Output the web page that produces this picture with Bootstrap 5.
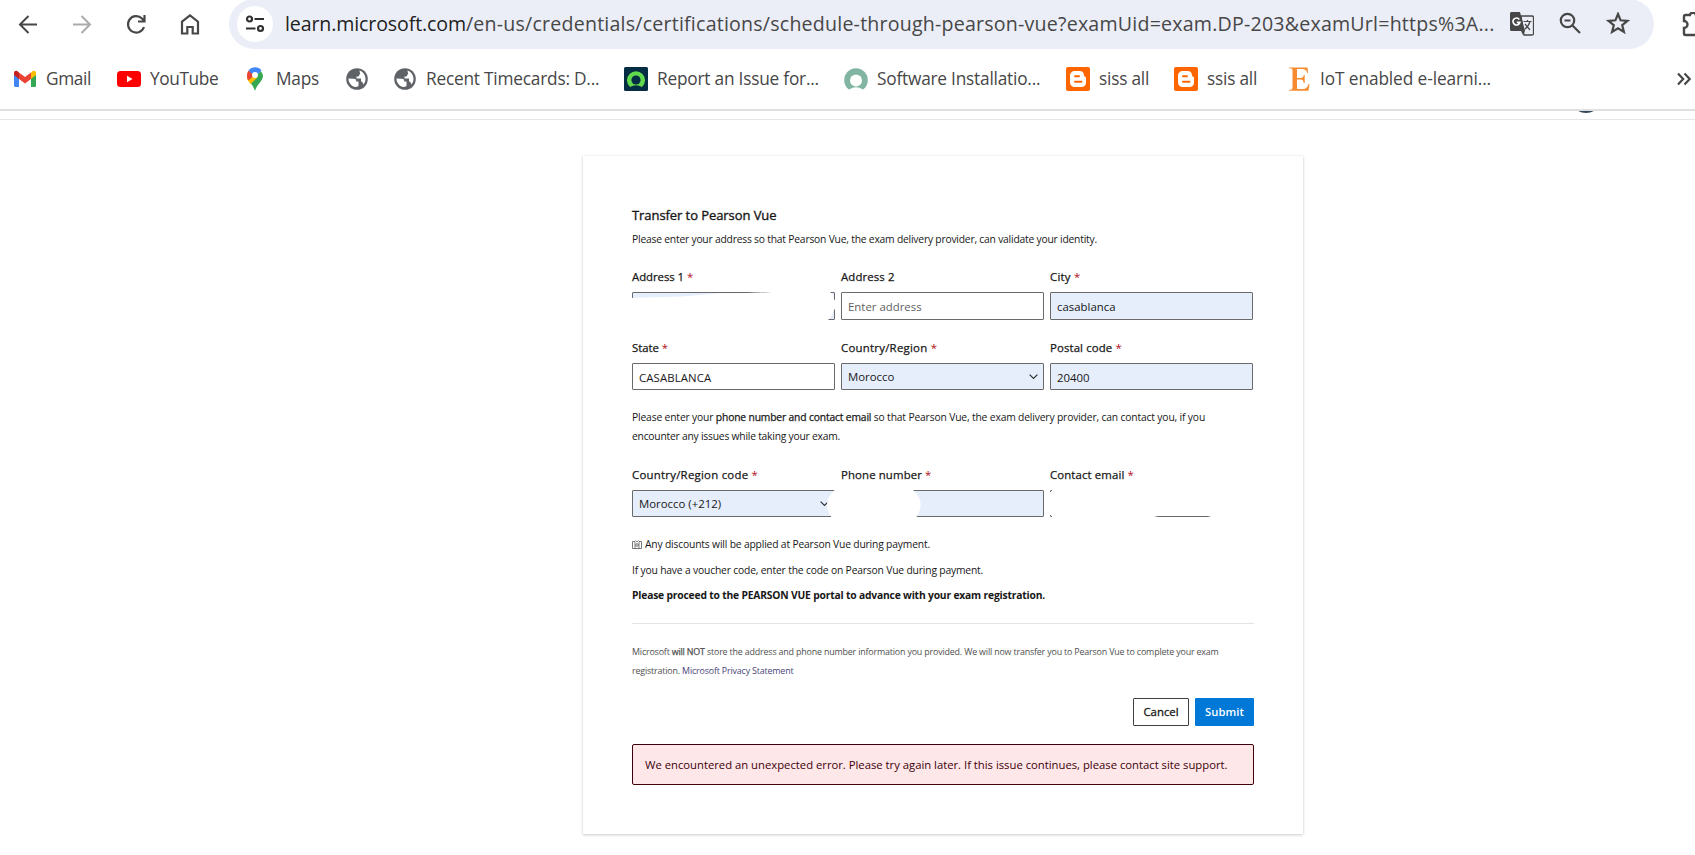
<!DOCTYPE html>
<html lang="en">
<head>
<meta charset="utf-8">
<meta name="viewport" content="width=device-width, initial-scale=1">
<title>Transfer to Pearson Vue</title>
<link rel="stylesheet" href="https://cdn.jsdelivr.net/npm/bootstrap@5.3.0/dist/css/bootstrap.min.css">
<style>
body{font-family:"Open Sans","Noto Sans",sans-serif;color:#171717;background:#fff;overflow:hidden;height:855px}
svg{display:block;flex:none}
.toolbar{height:49px;padding-left:16px;gap:30px;color:#474747}
.omnibox{flex:none;width:1425px;height:50px;margin:-1px 0 0 -3px;border-radius:25px;background:#ebeef7;padding:0 24px 0 8px}
.site-info{width:36px;height:36px;margin-right:12px}
.url{font-size:19.6px;letter-spacing:.21px;color:#474747;white-space:nowrap}
.url b{font-weight:400;color:#1f1f1f;letter-spacing:-.13px}
.omni-actions{gap:24px}
.bookmarks{display:grid;grid-template-columns:104px 126px 102px 48px 231px 220px 222px 108px 113px 390px 1fr;height:60px;padding-left:13px;font-size:17.3px;letter-spacing:-.22px;color:#474747;border-bottom:2px solid #dfdfdf;box-sizing:content-box;white-space:nowrap}
.bookmarks>div{display:flex;align-items:center;gap:9px}
.bookmarks>div:nth-child(-n+2){letter-spacing:-.4px}
.bookmarks>div:nth-child(10){letter-spacing:-.105px}
.site-header{height:9px;border-bottom:1px solid #e6e6e6;overflow:hidden;position:relative}
.avatar{position:absolute;left:1570px;top:-30px;width:32px;height:32px;border-radius:50%;background:#33475b}
.panel{width:720px;height:678px;margin:36px 0 0 583px;padding:48px 49px;box-shadow:0 1px 3px rgba(0,0,0,.2),0 0 1px rgba(0,0,0,.1)}
.panel h1{font-size:13px;font-weight:400;-webkit-text-stroke:.35px;letter-spacing:-.07px;line-height:20px;margin:1px 0 5px}
.copy{font-size:10.3px;letter-spacing:-.17px;line-height:19px;margin:0}
.copy.intro{letter-spacing:-.205px}
.copy.contact{letter-spacing:-.155px}
.copy.contact .second{letter-spacing:-.22px}
.copy.fw-bold{letter-spacing:-.186px}
.medium{-webkit-text-stroke:.25px}
.fields{display:grid;grid-template-columns:repeat(3,203px);gap:6px}
.field label{display:block;font-size:11.4px;letter-spacing:.12px;-webkit-text-stroke:.25px;line-height:18px;margin-bottom:6px}
.field label.wide{letter-spacing:.25px}
.field label.tight{letter-spacing:-.05px}
.field label i{font-style:normal;color:#b10e1c;-webkit-text-stroke:0}
.box{position:relative;height:27px}
.box.tall{height:28px}
.box .form-control,.box .form-select{height:100%;min-height:0;border:1px solid #6a6a6a;border-radius:1px;padding:1px 7px 0 6px;font-size:11.4px;line-height:24px;color:#171717;background-color:#fff}
.box .form-control.caps{letter-spacing:.1px}
.box .filled{background-color:#e6eefc}
.box .form-control::placeholder{color:#5f5f5f}
.box .form-select{background-size:9px 9px;background-position:right 5px center;background-image:url("data:image/svg+xml,%3csvg xmlns='http://www.w3.org/2000/svg' viewBox='0 0 9 9'%3e%3cpath fill='none' stroke='%23333' stroke-width='1.2' d='M.6 2.6l3.9 3.9 3.9-3.9'/%3e%3c/svg%3e")}
.mask{position:absolute;inset:0;overflow:visible;z-index:2}
.rule{height:1px;background:#e3e3e3}
.fine{font-size:8.9px;letter-spacing:-.17px;line-height:19px;color:#505050}
.fine a{color:#4b4579;text-decoration:none}
.actions{gap:6px}
.actions .btn{height:28px;border-radius:1px;padding:0;font-size:11.2px;font-weight:600;line-height:26px}
.actions .btn-cancel{width:56px;border:1px solid #404040;background:#fff;color:#171717;font-weight:400;font-size:11.4px;-webkit-text-stroke:.3px}
.actions .btn-submit{width:59px;background:#0078d7;color:#fff;letter-spacing:.09px}
.error-box{height:41px;border:1px solid #3f0009;border-radius:2px;background:#fde7e9;color:#3f0009;font-size:11.3px;letter-spacing:-.014px;padding:1px 12px 0;margin:18px 0 0}
</style>
</head>
<body>
<header>
  <div class="toolbar d-flex align-items-center">
    <svg width="24" height="24" viewBox="0 0 24 24" fill="none" stroke="#474747" stroke-width="2"><path d="M21 11.500H4.500M12.500 3L4 11.500 12.500 20"/></svg>
    <svg width="24" height="24" viewBox="0 0 24 24" fill="none" stroke="#ababab" stroke-width="2"><path d="M3 11.500h16.500M11.500 3l8.500 8.500-8.500 8.500"/></svg>
    <svg width="24" height="24" viewBox="0 0 24 24" fill="none" stroke="#474747" stroke-width="2.200"><path d="M20 14A8.200 8.200 0 1 1 18 5.500L20.500 8M20.500 2V8.500H14"/></svg>
    <svg width="24" height="24" viewBox="0 0 24 24" fill="none" stroke="#474747" stroke-width="2.200"><path d="M4 8.700L12 2.500l8 6.200V20.500h-5.300V14H9.300v6.500H4z"/></svg>
    <div class="omnibox d-flex align-items-center">
      <div class="site-info rounded-circle bg-white d-flex align-items-center justify-content-center">
        <svg width="20" height="20" viewBox="0 0 20 20" fill="none" stroke="#303030" stroke-width="2.200"><circle cx="4.500" cy="5" r="2.500"/><path d="M9.500 5H19M1 14.500h9.500"/><circle cx="15.500" cy="14.500" r="2.500"/></svg>
      </div>
      <span class="url"><b>learn.microsoft.com</b>/en-us/credentials/certifications/schedule-through-pearson-vue?examUid=exam.DP-203&amp;examUrl=https%3A...</span>
      <div class="omni-actions d-flex ms-auto">
        <svg width="24" height="24" viewBox="0 0 24 24"><path d="M11 4h11a1.500 1.500 0 0 1 1.500 1.500v16A1.500 1.500 0 0 1 22 23h-8z" fill="#ebeef7" stroke="#474747" stroke-width="1.300"/><path d="M1.500 0H10l5 19H1.500A1.500 1.500 0 0 1 0 17.500v-16A1.500 1.500 0 0 1 1.500 0zM11 19h4l-2 4z" fill="#474747"/><path d="M9.300 7.400a3.500 3.500 0 1 0 .6 2.900H6.800" fill="none" stroke="#fff" stroke-width="1.700"/><path d="M13.500 9.500h8M17.500 8v1.500M20 9.500c-1 4-3 6-5.500 8M15 12l5 6" stroke="#474747" stroke-width="1.200" fill="none"/></svg>
        <svg width="24" height="24" viewBox="0 0 24 24" fill="none" stroke="#474747" stroke-width="2.200"><circle cx="9.500" cy="8.500" r="6.700"/><path d="M14.500 13.500l7.500 7.500M6.500 8.500h6"/></svg>
        <svg width="24" height="24" viewBox="0 0 24 24"><path d="M12 2l2.600 6.300 6.900.5-5.300 4.400 1.700 6.700-5.900-3.600-5.900 3.600 1.700-6.700-5.300-4.400 6.900-.5z" fill="none" stroke="#474747" stroke-width="2.200"/></svg>
      </div>
    </div>
    <svg width="24" height="26" viewBox="0 0 24 26" fill="none" stroke="#474747" stroke-width="2.400" style="margin-left:-2px"><path d="M9 3H3.500A1.500 1.500 0 0 0 2 4.500V9a3.500 3.500 0 0 1 0 7v5.500A1.500 1.500 0 0 0 3.500 23H20M8 3c0-3 6-3 6 0h6"/></svg>
  </div>

  <nav class="bookmarks">
    <div><svg width="24" height="24" viewBox="0 0 24 24"><path fill="#4285f4" d="M1 7l5 3.500V20H2.500A1.500 1.500 0 0 1 1 18.500z"/><path fill="#34a853" d="M18 10.500L23 7v11.500a1.500 1.500 0 0 1-1.500 1.500H18z"/><path fill="#fbbc04" d="M18 5.500l1.500-1.200C21 3.200 23 4.200 23 6v2l-5 4z"/><path fill="#ea4335" d="M6 5.500l6 4.500 6-4.500V12l-6 4.500L6 12z"/><path fill="#c5221f" d="M1 6c0-1.800 2-2.800 3.500-1.700L6 5.500V12L1 8z"/></svg><span>Gmail</span></div>
    <div><svg width="24" height="24" viewBox="0 0 24 24"><rect y="4" width="24" height="16" rx="3.500" fill="#f00"/><path d="M10 8.800v6.400l5.500-3.200z" fill="#fff"/></svg><span>YouTube</span></div>
    <div><svg width="24" height="24" viewBox="0 0 24 24"><path d="M12 24c-1-3.500-2.500-5.500-4.500-8L17.500 4A8 8 0 0 1 20 8.500c0 6-6 8-8 15.500z" fill="#34a853"/><path d="M4.200 10.200L12 8l2 3-6.500 6C5.500 14.500 4.200 12.500 4.200 10.200z" fill="#fbbc04"/><path d="M5.500 3.500L12 8l-7 5.500C3.500 10.500 3.500 6.200 5.500 3.500z" fill="#ea4335"/><path d="M5.500 3.500C9-1 15.500-.8 18.500 3.500L12 10z" fill="#4285f4"/><circle cx="12" cy="8" r="3" fill="#fff"/></svg><span>Maps</span></div>
    <div><svg width="24" height="24" viewBox="0 0 24 24"><use href="#globe"/></svg></div>
    <div><svg width="24" height="24" viewBox="0 0 24 24"><g id="globe"><circle cx="12" cy="12" r="10.800" fill="#5f6368"/><path d="M3.500 11.500l5 .3c2.500.2 3 1.200 2.500 2.700h2.500v4.500c-2.500 1.500-5 1-7-.8s-3-4-3-6.700zM14.500 3.500c3.500 1 6 4.500 6 8.500 0 2-.8 4-2 5.500-.8-1-.5-3-2.500-3v-3h-4.500V9.500H13c1.500 0 1-2 2-2.500.5-.8-.5-1.500-.5-3.500z" fill="#fff"/></g></svg><span>Recent Timecards: D...</span></div>
    <div><svg width="24" height="24" viewBox="0 0 24 24"><rect width="24" height="24" rx="1.500" fill="#032d42"/><path d="M6 20A9 9 0 1 1 18 20l-3-1.200c-2-.8-4-.8-6 0z" fill="#62d84e"/><circle cx="12" cy="13" r="4.600" fill="#032d42"/></svg><span>Report an Issue for...</span></div>
    <div><svg width="24" height="24" viewBox="0 0 24 24"><path d="M5 22.500A11.800 11.800 0 1 1 19 22.500l-3-1.500c-2.500-1-5.500-1-8 0z" fill="#81b5a1"/><circle cx="12" cy="13.500" r="6" fill="#fff"/></svg><span>Software Installatio...</span></div>
    <div><svg width="24" height="24" viewBox="0 0 24 24"><g id="blogger"><rect width="24" height="24" rx="2" fill="#ff6600"/><path d="M9 4h4.500C16.500 4 18 6 18 8.500c0 1.500 2 .5 2 2.500v4.500c0 3-2 4.500-4.500 4.500H9c-3 0-5-2-5-5V9c0-3 2-5 5-5z" fill="#fff"/><path d="M9 9.200h4M9 14.700h6.500" stroke="#ff6600" stroke-width="2" stroke-linecap="round"/></g></svg><span>siss all</span></div>
    <div><svg width="24" height="24" viewBox="0 0 24 24"><use href="#blogger"/></svg><span>ssis all</span></div>
    <div><svg width="24" height="24" viewBox="0 0 24 24"><path d="M2 .5h18.500L21 6h-1c-.5-3-2-4-5-4H10v9h3.500c2 0 3-.8 3.200-3h1v8h-1c-.2-2.500-1.200-3.500-3.200-3.500H10V22h5.500c3.500 0 5-1.500 6-5h1l-1 6.800H2V23c2.500-.3 3.500-.5 3.500-2.500v-17C5.500 1.500 4.500 1.300 2 1.200z" fill="#f68b2f"/></svg><span>IoT enabled e-learni...</span></div>
    <div><svg width="14" height="14" viewBox="0 0 14 14" fill="none" stroke="#474747" stroke-width="2.200"><path d="M1 1.500L6.200 7 1 12.500M7.500 1.500L12.700 7l-5.200 5.500"/></svg></div>
  </nav>
</header>
<div class="site-header"><div class="avatar"></div></div>

<main class="panel">
  <h1>Transfer to Pearson Vue</h1>
  <p class="copy intro">Please enter your address so that Pearson Vue, the exam delivery provider, can validate your identity.</p>

  <div class="fields" style="margin-top:19px">
    <div class="field"><label class="tight">Address 1 <i>*</i></label><div class="box tall"><input class="form-control filled" aria-label="Address 1"><svg class="mask" width="203" height="28"><path fill="#fff" d="M-1 6L15 5.500 50 4.500 85 1.500 115 1 140 0V-1H197L201 3 201.500 7 204 9V16L202 18 199 25 195 29H-1z"/></svg></div></div>
    <div class="field"><label>Address 2</label><div class="box tall"><input class="form-control" placeholder="Enter address"></div></div>
    <div class="field"><label class="wide">City <i>*</i></label><div class="box tall"><input class="form-control filled" value="casablanca"></div></div>
  </div>
  <div class="fields" style="margin-top:19px">
    <div class="field"><label class="tight">State <i>*</i></label><div class="box"><input class="form-control caps" value="CASABLANCA"></div></div>
    <div class="field"><label class="wide">Country/Region <i>*</i></label><div class="box"><select class="form-select filled"><option>Morocco</option></select></div></div>
    <div class="field"><label>Postal code <i>*</i></label><div class="box"><input class="form-control filled" value="20400"></div></div>
  </div>

  <p class="copy contact" style="margin-top:18px">Please enter your <span class="medium">phone number and contact email</span> so that Pearson Vue, the exam delivery provider, can contact you, if you<br><span class="second">encounter any issues while taking your exam.</span></p>

  <div class="fields" style="margin-top:20px">
    <div class="field"><label class="wide">Country/Region code <i>*</i></label><div class="box"><select class="form-select filled"><option>Morocco (+212)</option></select></div></div>
    <div class="field"><label>Phone number <i>*</i></label><div class="box"><input class="form-control filled" aria-label="Phone number"><svg class="mask" width="203" height="27"><path fill="#fff" d="M-5-1Q-21 12-9 28H75Q86 12 71-1z"/></svg></div></div>
    <div class="field"><label>Contact email <i>*</i></label><div class="box"><input class="form-control" aria-label="Contact email"><svg class="mask" width="203" height="27"><path fill="#fff" d="M2-1H204V28H164L158 26H108L100 28H2V25H-1V2H2z"/></svg></div></div>
  </div>

  <p class="copy d-flex align-items-center" style="margin-top:18px;gap:3px"><svg width="10" height="9" viewBox="0 0 10 9" fill="none" stroke="#555" stroke-width=".8"><path d="M3 1.500H.5v7h9v-7H7M3 1.800v6.700M7 1.800v6.700M5 1.800L3.500.5M5 1.800L6.500.5"/><circle cx="5" cy="5" r="1.300"/></svg><span>Any discounts will be applied at Pearson Vue during payment.</span></p>
  <p class="copy" style="margin-top:7px">If you have a voucher code, enter the code on Pearson Vue during payment.</p>
  <p class="copy fw-bold" style="margin-top:6px">Please proceed to the PEARSON VUE portal to advance with your exam registration.</p>
  <div class="rule" style="margin-top:18px"></div>
  <p class="fine" style="margin:18px 0 0">Microsoft <span class="medium">will NOT</span> store the address and phone number information you provided. We will now transfer you to Pearson Vue to complete your exam<br>registration. <a href="#">Microsoft Privacy Statement</a></p>
  <div class="actions d-flex justify-content-end" style="margin-top:18px">
    <button class="btn btn-cancel">Cancel</button>
    <button class="btn btn-submit">Submit</button>
  </div>
  <div class="alert error-box d-flex align-items-center">We encountered an unexpected error. Please try again later. If this issue continues, please contact site support.</div>
</main>
</body>
</html>
